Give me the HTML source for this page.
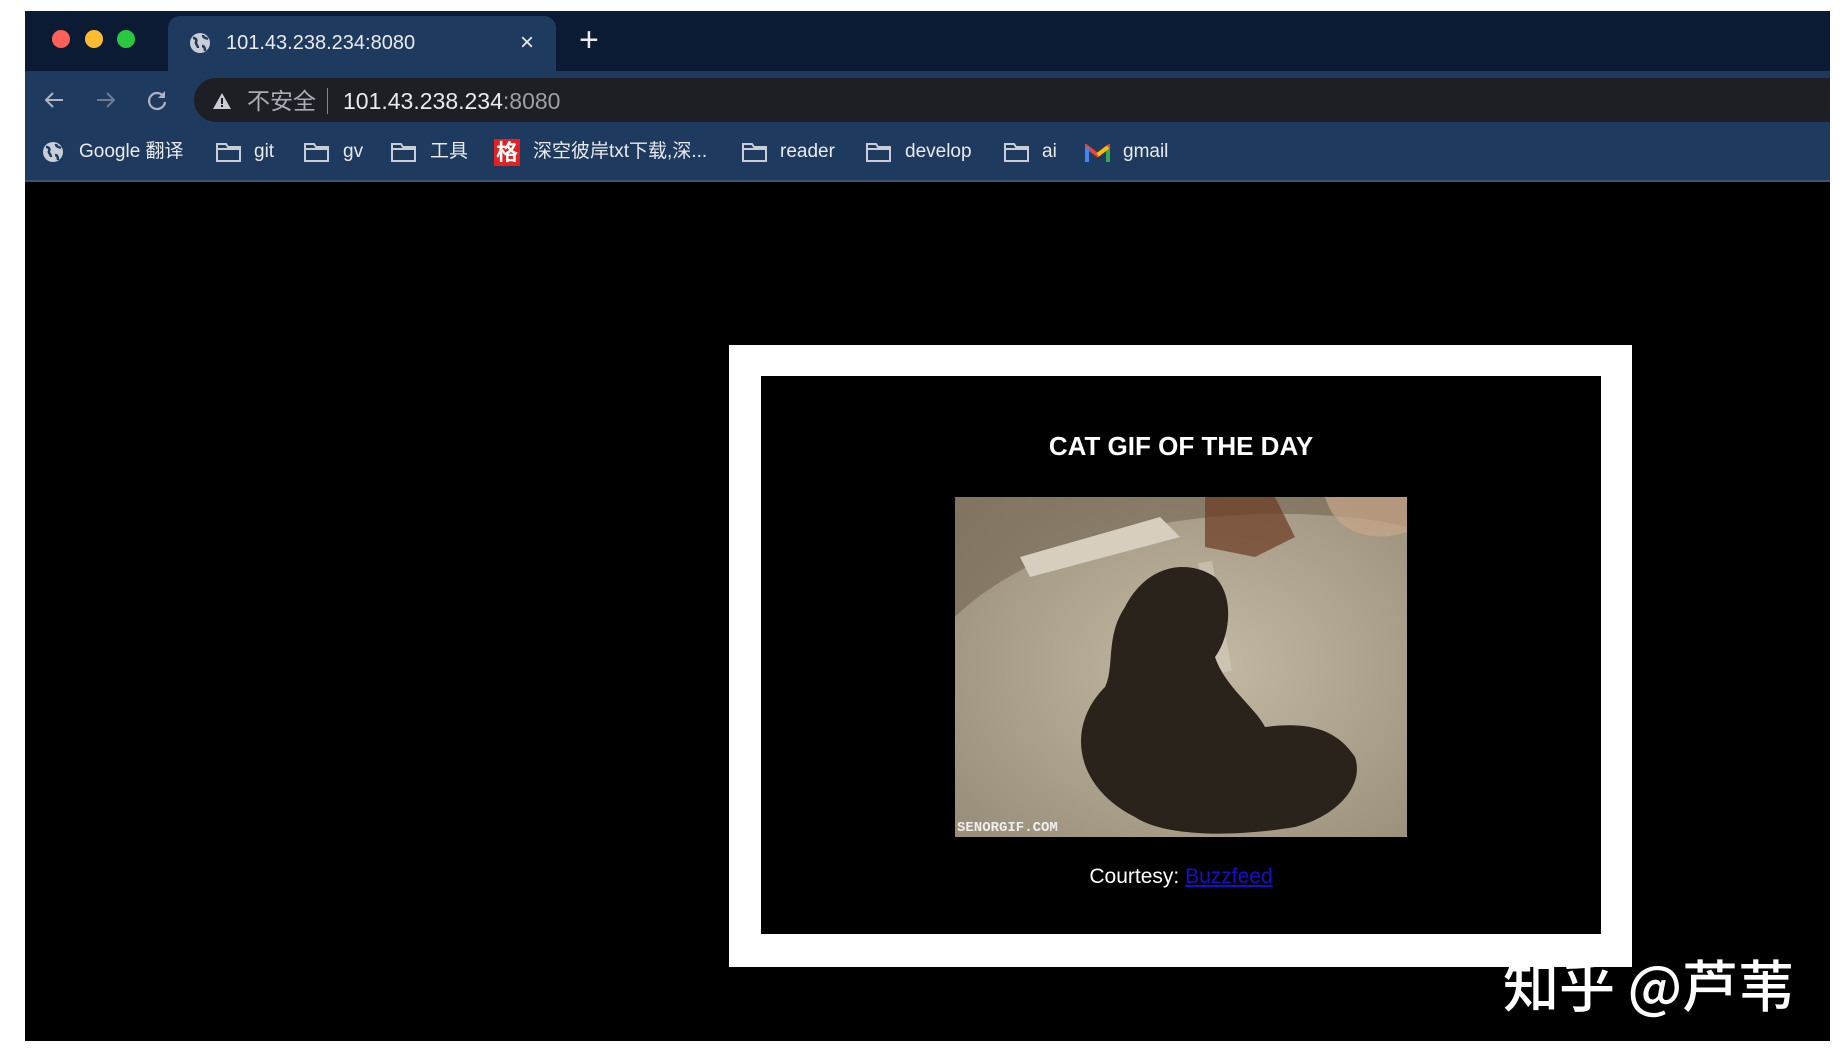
<!DOCTYPE html>
<html><head><meta charset="utf-8"><style>
*{margin:0;padding:0;box-sizing:border-box}
body{width:1844px;height:1062px;background:#fff;position:relative;overflow:hidden;font-family:"Liberation Sans","Noto Sans CJK SC",sans-serif}
.abs{position:absolute}
#tabbar{left:25px;top:11px;width:1805px;height:60px;background:#0c1b34}
#tab{left:168px;top:16px;width:388px;height:56px;background:#1f3a5f;border-radius:12px 12px 0 0}
#toolbar{left:25px;top:71px;width:1805px;height:55px;background:#1f3a5f}
#url{left:194px;top:78px;width:1636px;height:44px;background:#1d1f24;border-radius:22px 0 0 22px}
#bm{left:25px;top:126px;width:1805px;height:56px;background:#1f3a5f;border-bottom:2px solid #3c5478}
#content{left:25px;top:182px;width:1805px;height:859px;background:#000}
.dot{width:18px;height:18px;border-radius:50%;top:30px}
.t{color:#e8eaed;font-size:20px;white-space:nowrap;line-height:24px}
.bk{color:#e8eaed;font-size:19px;top:140px;height:24px;line-height:24px;white-space:nowrap}
.fold{width:25px;height:19px;top:143px}
</style></head><body>
<div id="tabbar" class="abs"></div>
<div class="abs dot" style="left:52px;background:#fe5f57"></div>
<div class="abs dot" style="left:85px;background:#febc2e"></div>
<div class="abs dot" style="left:117px;background:#28c840"></div>
<div id="tab" class="abs"></div>
<svg class="abs" style="left:189px;top:32px" width="22" height="22" viewBox="0 0 22 22"><circle cx="11" cy="11" r="10" fill="#c8cdd6"/><path d="M4 6c3 0 4 2 3 4s2 3 2 6M14 3c0 3 3 3 5 4M13 14c2 0 3 2 3 5" stroke="#1f3a5f" stroke-width="2.5" fill="none"/></svg>
<div class="abs t" style="left:226px;top:31px">101.43.238.234:8080</div>
<div class="abs t" style="left:520px;top:31px;font-size:24px">×</div>
<div class="abs t" style="left:579px;top:28px;font-size:34px;font-weight:300">+</div>
<div id="toolbar" class="abs"></div>
<div id="url" class="abs"></div>
<svg class="abs" style="left:42px;top:88px" width="24" height="24" viewBox="0 0 24 24"><path d="M21 12H4M11 5l-7 7 7 7" stroke="#aeb4c0" stroke-width="2" fill="none"/></svg>
<svg class="abs" style="left:94px;top:88px" width="24" height="24" viewBox="0 0 24 24"><path d="M3 12h17M13 5l7 7-7 7" stroke="#6d7a90" stroke-width="2" fill="none"/></svg>
<svg class="abs" style="left:145px;top:88px" width="24" height="24" viewBox="0 0 24 24"><path d="M19 9A8 8 0 1 0 20 14" stroke="#aeb4c0" stroke-width="2.2" fill="none"/><path d="M20 3v7h-7z" fill="#aeb4c0"/></svg>
<svg class="abs" style="left:212px;top:92px" width="20" height="18" viewBox="0 0 20 18"><path d="M10 1L19 17H1z" fill="#c8cdd6"/><rect x="9" y="6" width="2" height="6" fill="#1d1f24"/><rect x="9" y="13" width="2" height="2" fill="#1d1f24"/></svg>
<div class="abs t" style="left:247px;top:89px;font-size:23px;color:#a8adb6">不安全</div>
<div class="abs" style="left:327px;top:88px;width:1px;height:26px;background:#80868b"></div>
<div class="abs t" style="left:343px;top:89px;font-size:23px">101.43.238.234<span style="color:#9aa0a6">:8080</span></div>
<div id="bm" class="abs"></div>
<svg class="abs" style="left:42px;top:141px" width="22" height="22" viewBox="0 0 22 22"><circle cx="11" cy="11" r="10" fill="#c8cdd6"/><path d="M4 6c3 0 4 2 3 4s2 3 2 6M14 3c0 3 3 3 5 4M13 14c2 0 3 2 3 5" stroke="#1f3a5f" stroke-width="2.5" fill="none"/></svg>
<div class="abs bk" style="left:79px">Google 翻译</div>
<svg class="abs fold" style="left:216px" viewBox="0 0 25 19"><path d="M1 1h9l2 3h12v14H1z M1 6h23" stroke="#c8cdd6" stroke-width="2" fill="none"/></svg><div class="abs bk" style="left:254px">git</div>
<svg class="abs fold" style="left:304px" viewBox="0 0 25 19"><path d="M1 1h9l2 3h12v14H1z M1 6h23" stroke="#c8cdd6" stroke-width="2" fill="none"/></svg><div class="abs bk" style="left:343px">gv</div>
<svg class="abs fold" style="left:391px" viewBox="0 0 25 19"><path d="M1 1h9l2 3h12v14H1z M1 6h23" stroke="#c8cdd6" stroke-width="2" fill="none"/></svg><div class="abs bk" style="left:430px">工具</div>
<div class="abs" style="left:494px;top:139px;width:26px;height:27px;background:#e52020;color:#fff;font-size:22px;line-height:27px;text-align:center;font-weight:bold">格</div>
<div class="abs bk" style="left:533px">深空彼岸txt下载,深...</div>
<svg class="abs fold" style="left:742px" viewBox="0 0 25 19"><path d="M1 1h9l2 3h12v14H1z M1 6h23" stroke="#c8cdd6" stroke-width="2" fill="none"/></svg><div class="abs bk" style="left:780px">reader</div>
<svg class="abs fold" style="left:866px" viewBox="0 0 25 19"><path d="M1 1h9l2 3h12v14H1z M1 6h23" stroke="#c8cdd6" stroke-width="2" fill="none"/></svg><div class="abs bk" style="left:905px">develop</div>
<svg class="abs fold" style="left:1004px" viewBox="0 0 25 19"><path d="M1 1h9l2 3h12v14H1z M1 6h23" stroke="#c8cdd6" stroke-width="2" fill="none"/></svg><div class="abs bk" style="left:1042px">ai</div>
<svg class="abs" style="left:1085px;top:144px" width="25" height="19" viewBox="0 0 25 19"><path d="M2 18V3l10.5 8L23 3v15" stroke="#ea4335" stroke-width="4" fill="none"/><path d="M2 18V3" stroke="#4285f4" stroke-width="4"/><path d="M23 18V3" stroke="#34a853" stroke-width="4"/><path d="M12.5 11L23 3" stroke="#fbbc04" stroke-width="4"/></svg>
<div class="abs bk" style="left:1123px">gmail</div>
<div id="content" class="abs"></div>
<div class="abs" style="left:729px;top:345px;width:903px;height:622px;background:#fff"></div>
<div class="abs" style="left:761px;top:376px;width:840px;height:558px;background:#000"></div>
<div class="abs" style="left:761px;top:431px;width:840px;text-align:center;color:#fff;font-size:26px;font-weight:bold">CAT GIF OF THE DAY</div>
<svg class="abs" style="left:955px;top:497px" width="452" height="340" viewBox="0 0 452 340">
<defs><radialGradient id="g" cx="0.55" cy="0.5" r="0.7"><stop offset="0" stop-color="#c4b9a3"/><stop offset="1" stop-color="#9a8f7a"/></radialGradient></defs>
<rect width="452" height="340" fill="url(#g)"/>
<path d="M0 0h452v30c-80-20-230-20-330 20C60 70 20 100 0 120z" fill="#6e5f4c" opacity=".55"/>
<path d="M250 0h70l20 40-40 20-50-10z" fill="#6b3a22" opacity=".7"/>
<path d="M370 0h82v35c-30 10-70 5-82-35z" fill="#c8a789" opacity=".7"/>
<path d="M65 60l140-40 20 20-150 40z" fill="#d6cfc0"/>
<path d="M250 65l20 110" stroke="#d8d2c4" stroke-width="14" opacity=".5"/>
<path d="M170 110c20-40 60-50 90-30 20 20 15 60 0 80 10 30 40 50 50 70 40-5 70 0 90 30 10 30-20 60-60 70-60 10-130 10-160-10-60-30-70-90-30-130 10-20 0-50 20-80z" fill="#29231b"/>
<text x="2" y="334" font-family="Liberation Mono,monospace" font-size="14" font-weight="bold" fill="#eee">SENORGIF.COM</text>
</svg>
<div class="abs" style="left:761px;top:865px;width:840px;text-align:center;color:#fff;font-size:21px">Courtesy: <span style="color:#1a0dcc;text-decoration:underline">Buzzfeed</span></div>
<div class="abs" style="left:1503px;top:952px;color:#fff;font-size:56px;font-weight:500;white-space:nowrap;font-family:'Noto Sans CJK SC',sans-serif;line-height:64px">知乎 @芦苇</div>
</body></html>
